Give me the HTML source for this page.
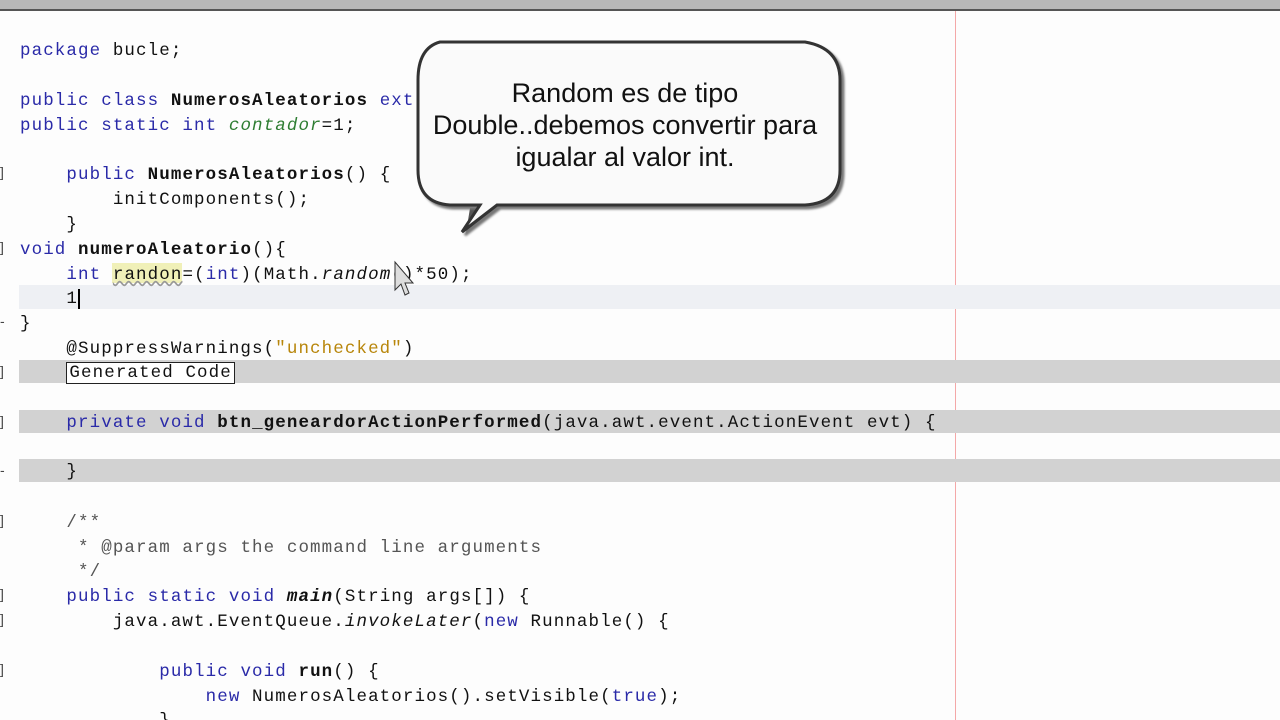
<!DOCTYPE html>
<html><head><meta charset="utf-8"><style>
html,body{margin:0;width:1280px;height:720px;overflow:hidden}
body{background:#fdfdfd;position:relative;font-family:"Liberation Mono",monospace}
.tb{position:absolute;left:0;top:0;width:1280px;height:9px;background:#b8b8b8;border-bottom:2px solid #555}
.band{position:absolute;left:19px;width:1261px;height:23px;background:#d2d2d2}
.ln{position:absolute;left:20px;font-size:17.5px;letter-spacing:1.1px;white-space:pre;color:#111;line-height:20px}
.k{color:#2a2aa8}.b{font-weight:bold}.g{color:#2e7d32;font-style:italic}.s{color:#b8860b}.i{font-style:italic}
.f{position:absolute;left:0;font-size:14px;color:#444;font-family:"Liberation Sans",sans-serif}
</style></head><body>
<div class="tb"></div>
<div style="position:absolute;left:955px;top:11px;width:1px;height:709px;background:#f4a8a8"></div>
<div style="position:absolute;left:19px;top:285px;width:1261px;height:24px;background:#eef0f4"></div>
<div class="band" style="top:360px"></div>
<div class="band" style="top:410px"></div>
<div class="band" style="top:459px"></div>
<div style="position:absolute;left:112px;top:263px;width:70px;height:20px;background:#f0f0b8"></div>

<div class="ln" style="top:41px"><span class="k">package</span> bucle;</div>
<div class="ln" style="top:91px"><span class="k">public class</span> <span class="b">NumerosAleatorios</span> <span class="k">ext</span></div>
<div class="ln" style="top:116px"><span class="k">public static int</span> <span class="g">contador</span>=1;</div>
<div class="ln" style="top:165px">    <span class="k">public</span> <span class="b">NumerosAleatorios</span>() {</div>
<div class="ln" style="top:190px">        initComponents();</div>
<div class="ln" style="top:215px">    }</div>
<div class="ln" style="top:240px"><span class="k">void</span> <span class="b">numeroAleatorio</span>(){</div>
<div class="ln" style="top:265px">    <span class="k">int</span> <span style="text-decoration:underline wavy #999">randon</span>=(<span class="k">int</span>)(Math.<span class="i">random</span>()*50);</div>
<div class="ln" style="top:289px">    1<span style="border-left:2px solid #000"></span></div>
<div class="ln" style="top:314px">}</div>
<div class="ln" style="top:339px">    @SuppressWarnings(<span class="s">"unchecked"</span>)</div>
<div class="ln" style="top:363px">    <span style="border:1.5px solid #222;background:#fff;padding:0 2px">Generated Code</span></div>
<div class="ln" style="top:413px">    <span class="k">private void</span> <span class="b">btn_geneardorActionPerformed</span>(java.awt.event.ActionEvent evt) {</div>
<div class="ln" style="top:462px">    }</div>
<div class="ln" style="top:513px">    <span style="color:#555">/**</span></div>
<div class="ln" style="top:538px">     <span style="color:#555">* @param args the command line arguments</span></div>
<div class="ln" style="top:562px">     <span style="color:#555">*/</span></div>
<div class="ln" style="top:587px">    <span class="k">public static void</span> <span class="b i">main</span>(String args[]) {</div>
<div class="ln" style="top:612px">        java.awt.EventQueue.<span class="i">invokeLater</span>(<span class="k">new</span> Runnable() {</div>
<div class="ln" style="top:662px">            <span class="k">public void</span> <span class="b">run</span>() {</div>
<div class="ln" style="top:687px">                <span class="k">new</span> NumerosAleatorios().setVisible(<span class="k">true</span>);</div>
<div class="ln" style="top:711px">            }</div>

<div class="f" style="top:164px">]</div><div class="f" style="top:239px">]</div><div class="f" style="top:313px">-</div>
<div class="f" style="top:363px">]</div><div class="f" style="top:413px">]</div><div class="f" style="top:462px">-</div>
<div class="f" style="top:512px">]</div><div class="f" style="top:586px">]</div><div class="f" style="top:611px">]</div><div class="f" style="top:661px">]</div>

<svg style="position:absolute;left:0;top:0" width="1280" height="720">
<path d="M470,208 L498,208 L466,233 Z" fill="#555"/>
<path d="M440,42 Q418,48 418,80 L418,170 Q418,203 450,205 L480,205 L462,232 L497,205 L805,205 Q840,203 840,170 L840,80 Q840,48 805,42 Z" fill="#fafafa" stroke="#333" stroke-width="3" style="filter:drop-shadow(3px 3px 1px #777)"/>
<path d="M395,262 L395,290 L401,284 L405,295 L409,293 L405,283 L413,283 Z" fill="#ddd" stroke="#333" stroke-width="1"/>
</svg>
<div style="position:absolute;left:410px;top:77px;width:430px;text-align:center;font-family:'Liberation Sans',sans-serif;font-size:27px;line-height:32px;color:#111">Random es de tipo<br>Double..debemos convertir para<br>igualar al valor int.</div>
</body></html>
